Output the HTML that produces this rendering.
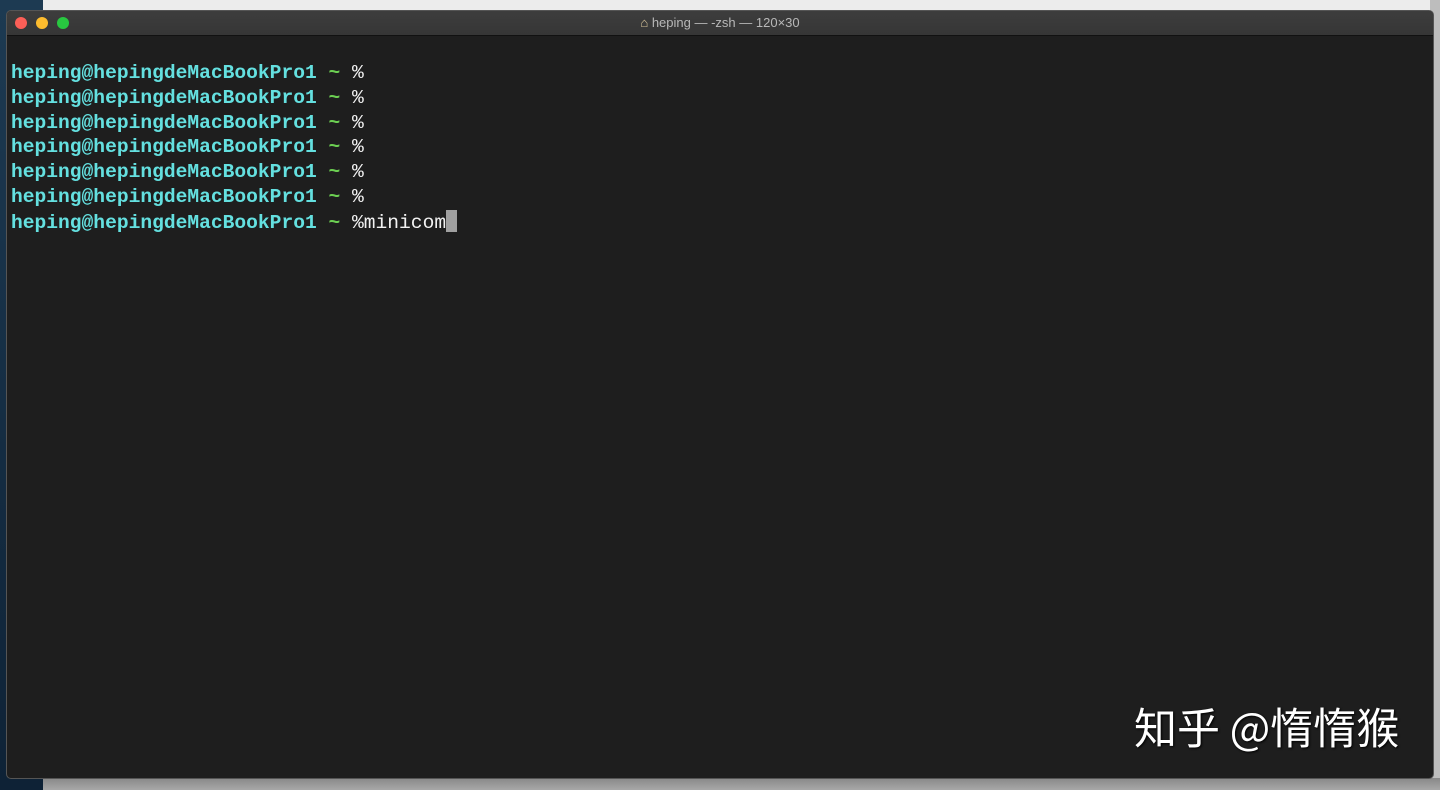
<!DOCTYPE html>
<html><head><meta charset="utf-8"><style>
html,body{margin:0;padding:0;width:1440px;height:790px;overflow:hidden;background:#9a9a9a;}
.bgl{position:absolute;left:0;top:0;width:43px;height:790px;background:linear-gradient(#1d3a52,#0e2236);}
.bgt{position:absolute;left:43px;top:0;width:1397px;height:12px;background:#ececec;}
.bgr{position:absolute;left:1430px;top:0;width:10px;height:790px;background:#bdbdbd;}
.bgb{position:absolute;left:43px;top:778px;width:1397px;height:12px;background:linear-gradient(#888,#a8a8a8);}
.win{position:absolute;left:6px;top:10px;width:1428px;height:769px;background:#1e1e1e;border-radius:5px;overflow:hidden;border:1px solid #555;box-sizing:border-box;}
.tb{position:absolute;left:0;top:0;right:0;height:24px;background:linear-gradient(#3d3d3d,#363636);border-bottom:1px solid #111;}
.dot{position:absolute;top:6px;width:12px;height:12px;border-radius:50%;}
.title{position:absolute;left:0;right:0;top:4px;text-align:center;font:13px "Liberation Sans",sans-serif;color:#b8b8b8;}
.term{position:absolute;left:4px;top:50px;font-family:"Liberation Mono",monospace;font-size:19.6px;line-height:24.75px;font-weight:bold;color:#fff;white-space:pre;}
.c{color:#64e0e0}.g{color:#6ccf52}.w{color:#f2f2f2}
.n{font-weight:normal}
.cur{display:inline-block;width:11px;height:22px;background:#a0a0a0;vertical-align:-4px;}
.wm{position:absolute;left:1127px;top:684px;font-family:"Noto Sans CJK SC",sans-serif;font-size:43px;color:#fff;text-shadow:1px 1px 2px #000;white-space:nowrap;}
.br{position:absolute;left:1427px;width:1px;height:16px;border-right:1px solid #777;}
</style></head><body>
<div class="bgl"></div><div class="bgt"></div><div class="bgr"></div><div class="bgb"></div>
<div class="win">
 <div class="tb">
  <div class="dot" style="left:8px;background:#fc5f57"></div>
  <div class="dot" style="left:29px;background:#fdbc2e"></div>
  <div class="dot" style="left:50px;background:#28c840"></div>
  <div class="title"><span style="color:#d8c49a">&#8962;</span> heping — -zsh — 120×30</div>
 </div>
 <div class="term"><span class="c">heping@hepingdeMacBookPro1</span> <span class="g">~</span> <span class="w n">%</span>
<span class="c">heping@hepingdeMacBookPro1</span> <span class="g">~</span> <span class="w n">%</span>
<span class="c">heping@hepingdeMacBookPro1</span> <span class="g">~</span> <span class="w n">%</span>
<span class="c">heping@hepingdeMacBookPro1</span> <span class="g">~</span> <span class="w n">%</span>
<span class="c">heping@hepingdeMacBookPro1</span> <span class="g">~</span> <span class="w n">%</span>
<span class="c">heping@hepingdeMacBookPro1</span> <span class="g">~</span> <span class="w n">%</span>
<span class="c">heping@hepingdeMacBookPro1</span> <span class="g">~</span> <span class="w n">%minicom</span><span class="cur"></span></div>
 <div class="br" style="top:79px"></div><div class="br" style="top:104px"></div><div class="br" style="top:129px"></div><div class="br" style="top:153px"></div><div class="br" style="top:178px"></div>
 <div class="wm">知乎 @惰惰猴</div>
</div>
</body></html>
